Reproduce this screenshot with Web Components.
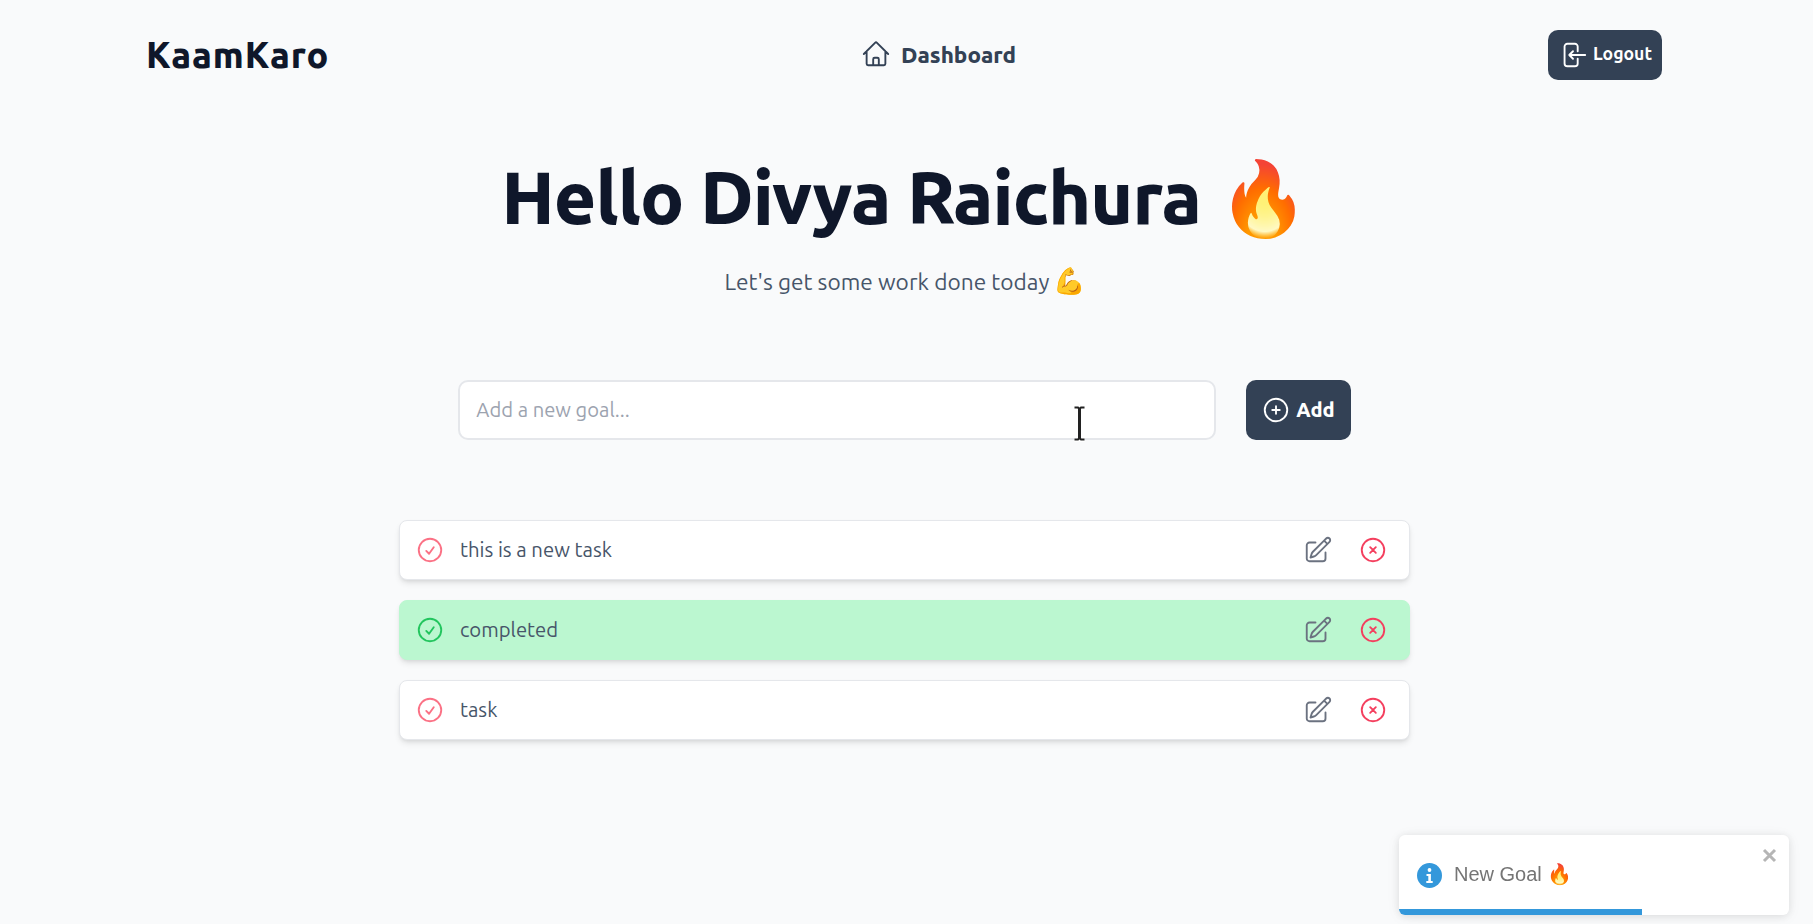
<!DOCTYPE html>
<html>
<head>
<meta charset="utf-8">
<title>KaamKaro</title>
<style>
    html, body { margin: 0; background: #f9fafb; }
    body { font-family: Ubuntu, "Noto Sans", sans-serif; min-height: 924px; }
</style>
</head>
<body>
<kaam-app>
    <kaam-nav></kaam-nav>
    <kaam-hero name="Divya Raichura"></kaam-hero>
    <kaam-form></kaam-form>
    <kaam-list>
        <kaam-task>this is a new task</kaam-task>
        <kaam-task done>completed</kaam-task>
        <kaam-task>task</kaam-task>
    </kaam-list>
</kaam-app>
<kaam-toast>New Goal 🔥</kaam-toast>

<script>
const ICONS = {
    home: 'M2.25 12l8.954-8.955c.44-.439 1.152-.439 1.591 0L21.75 12M4.5 9.75v10.125c0 .621.504 1.125 1.125 1.125H9.75v-4.875c0-.621.504-1.125 1.125-1.125h2.25c.621 0 1.125.504 1.125 1.125V21h4.125c.621 0 1.125-.504 1.125-1.125V9.75M8.25 21h8.25',
    logout: 'M15.75 9V5.25A2.25 2.25 0 0013.5 3h-6a2.25 2.25 0 00-2.25 2.25v13.5A2.25 2.25 0 007.5 21h6a2.25 2.25 0 002.25-2.25V15M12 9l-3 3m0 0l3 3m-3-3h12.75',
    plus: 'M12 9v6m3-3H9m12 0a9 9 0 11-18 0 9 9 0 0118 0z',
    check: 'M9 12.75L11.25 15 15 9.75M21 12a9 9 0 11-18 0 9 9 0 0118 0z',
    cross: 'M9.75 9.75l4.5 4.5m0-4.5l-4.5 4.5M21 12a9 9 0 11-18 0 9 9 0 0118 0z',
    edit: 'M16.862 4.487l1.687-1.688a1.875 1.875 0 112.652 2.652L10.582 16.07a4.5 4.5 0 01-1.897 1.13L6 18l.8-2.685a4.5 4.5 0 011.13-1.897l8.932-8.931zm0 0L19.5 7.125M18 14v4.75A2.25 2.25 0 0115.75 21H5.25A2.25 2.25 0 013 18.75V8.25A2.25 2.25 0 015.25 6H10'
};

function icon (name, color) {
    return `<svg width="30" height="30" viewBox="0 0 24 24" fill="none" stroke="${color}" stroke-width="1.5" stroke-linecap="round" stroke-linejoin="round" style="display:block;flex:none"><path d="${ICONS[name]}"/></svg>`;
}

class KaamElement extends HTMLElement {
    constructor (html) {
        super();
        this._shadowRoot = this.attachShadow({ mode: 'open' });
        const template = document.createElement('template');
        template.innerHTML = html;
        this._shadowRoot.appendChild(template.content.cloneNode(true));
    }
}

class KaamApp extends KaamElement {
    constructor () {
        super(`<style>
            :host { display: flex; flex-direction: column; align-items: center; padding-right: 4px; }
        </style><slot></slot>`);
    }
}

class KaamNav extends KaamElement {
    constructor () {
        super(`<style>
            :host { display: flex; align-self: stretch; align-items: center; justify-content: space-between; padding: 30px 147px 0 146px; }
            .logo { font-size: 36px; font-weight: 800; letter-spacing: 0.9px; color: #0f172a; line-height: 50px; }
            .link { display: flex; align-items: center; gap: 10px; padding-bottom: 2px; font-size: 22.4px; font-weight: 800; color: #334155; }
            .logout { display: flex; align-items: center; gap: 5px; height: 50px; box-sizing: border-box; padding: 0 10px 4px 10px; background: #334155; color: #fff; border-radius: 10px; font-size: 17.6px; font-weight: 700; }
            .logout svg { margin-top: 4px; }
        </style>
        <div class="logo">KaamKaro</div>
        <div class="link">${icon('home', '#334155')}<span>Dashboard</span></div>
        <div class="logout">${icon('logout', '#fff')}<span>Logout</span></div>`);
    }
}

class KaamHero extends KaamElement {
    constructor () {
        super(`<style>
            :host { display: flex; flex-direction: column; align-items: center; }
            h1 { margin: 72px 0 0; font-size: 73px; line-height: 90px; font-weight: 800; letter-spacing: -0.9px; color: #0f172a; }
            p { margin: 24px 0 0; font-size: 22.7px; line-height: 30px; color: #475569; }
            .emoji { font-size: 26px; margin-left: -2px; }
        </style>
        <h1></h1>
        <p>Let's get some work done today <span class="emoji">💪</span></p>`);
    }

    connectedCallback () {
        this._shadowRoot.querySelector('h1').textContent = 'Hello ' + this.getAttribute('name') + ' 🔥';
    }
}

class KaamForm extends KaamElement {
    constructor () {
        super(`<style>
            :host { display: flex; align-items: center; gap: 30px; margin-top: 83px; position: relative; }
            input { width: 758px; height: 60px; box-sizing: border-box; padding: 0 16px 1px; background: #fff; border: 2px solid #e5e7eb; border-radius: 10px; font: 20.2px Ubuntu, "Noto Sans", sans-serif; color: #334155; outline: none; }
            input::placeholder { color: #9ca3af; opacity: 1; }
            button { display: flex; align-items: center; gap: 5px; height: 60px; box-sizing: border-box; padding: 0 16px 1px 15px; background: #334155; color: #fff; border: 0; border-radius: 10px; font: 800 20px Ubuntu, "Noto Sans", sans-serif; }
            button svg { margin-top: 1px; }
            .cursor { position: absolute; left: 614px; top: 25px; }
        </style>
        <input type="text" placeholder="Add a new goal...">
        <button>${icon('plus', '#fff')}<span>Add</span></button>
        <svg class="cursor" width="15" height="37" viewBox="0 0 15 37" fill="none">
            <path d="M2.5 2.5h3.5l1.5 1.5 1.5-1.5h3.5M7.5 4v29M2.5 34.5h3.5l1.5-1.5 1.5 1.5h3.5" stroke="#fff" stroke-width="5"/>
            <path d="M2.5 2.5h3.5l1.5 1.5 1.5-1.5h3.5M2.5 34.5h3.5l1.5-1.5 1.5 1.5h3.5" stroke="#222" stroke-width="2"/>
            <path d="M7.5 4v29" stroke="#222" stroke-width="3"/>
        </svg>`);
    }
}

class KaamList extends KaamElement {
    constructor () {
        super(`<style>
            :host { display: flex; flex-direction: column; gap: 20px; width: 1011px; margin-top: 80px; }
        </style><slot></slot>`);
    }
}

class KaamTask extends KaamElement {
    constructor () {
        super(`<style>
            :host { display: flex; align-items: center; height: 60px; box-sizing: border-box; padding: 0 21px 0 15px; background: #fff; border: 1px solid #e5e7eb; border-radius: 8px; box-shadow: 0 4px 6px -1px rgb(0 0 0 / 0.1), 0 2px 4px -2px rgb(0 0 0 / 0.1); font-size: 20.3px; color: #475569; }
            :host([done]) { background: #bbf7d0; border-color: #bbf7d0; }
            .check { display: flex; }
            .label { flex: 1; margin: 0 0 2px 15px; }
            .actions { display: flex; gap: 25px; }
        </style>
        <span class="check"></span>
        <span class="label"><slot></slot></span>
        <span class="actions">${icon('edit', '#6b7280')}${icon('cross', '#f43f5e')}</span>`);
    }

    connectedCallback () {
        const color = this.hasAttribute('done') ? '#22c55e' : '#fb7185';
        this._shadowRoot.querySelector('.check').innerHTML = icon('check', color);
    }
}

class KaamToast extends KaamElement {
    constructor () {
        super(`<style>
            :host { position: fixed; right: 24px; bottom: 9px; display: flex; align-items: center; width: 390px; height: 80px; box-sizing: border-box; padding: 0 18px; background: #fff; border-radius: 6px; box-shadow: 0 1px 10px 0 rgba(0,0,0,.1), 0 2px 15px 0 rgba(0,0,0,.05); font: 20px "Liberation Sans", Arial, sans-serif; color: #757575; overflow: hidden; }
            .info { flex: none; width: 25px; height: 25px; margin-right: 12px; }
            .text { margin-bottom: 2px; }
            .close { position: absolute; right: 12px; top: 13px; width: 15px; height: 15px; }
            .bar { position: absolute; left: 0; bottom: 0; width: 243px; height: 6px; background: #3498db; }
        </style>
        <svg class="info" viewBox="0 0 25 25">
            <circle cx="12.5" cy="12.5" r="12.5" fill="#3498db"/>
            <circle cx="12.5" cy="7" r="1.9" fill="#fff"/>
            <path d="M9.5 11h4.4v7h1.8v1.9H9.3V18h2v-5.1H9.5z" fill="#fff"/>
        </svg>
        <span class="text"><slot></slot></span>
        <svg class="close" viewBox="0 0 15 15"><path d="M2 2l11 11M13 2L2 13" stroke="#b5b5b5" stroke-width="3"/></svg>
        <div class="bar"></div>`);
    }
}

customElements.define('kaam-app', KaamApp);
customElements.define('kaam-nav', KaamNav);
customElements.define('kaam-hero', KaamHero);
customElements.define('kaam-form', KaamForm);
customElements.define('kaam-list', KaamList);
customElements.define('kaam-task', KaamTask);
customElements.define('kaam-toast', KaamToast);
</script>
</body>
</html>
